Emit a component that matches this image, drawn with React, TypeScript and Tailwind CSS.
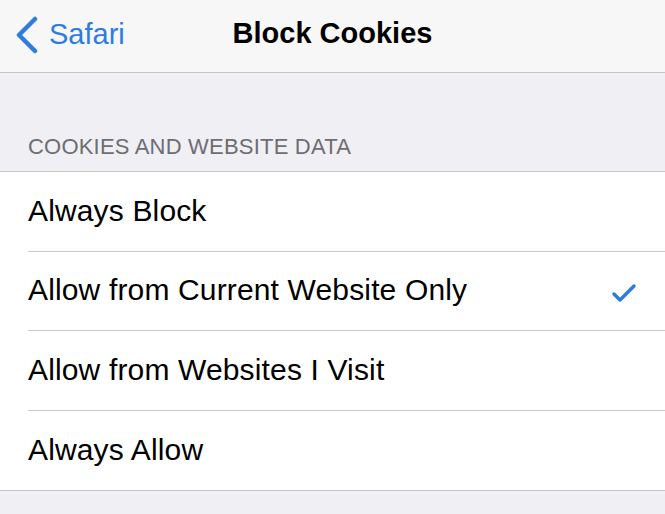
export default function App() {
  const rows = [
    { label: "Always Block", checked: false },
    { label: "Allow from Current Website Only", checked: true },
    { label: "Allow from Websites I Visit", checked: false },
    { label: "Always Allow", checked: false },
  ];

  return (
    <div className="flex h-[514px] w-[665px] flex-col overflow-hidden bg-[#efeff4] font-['Liberation_Sans',sans-serif]">
      <header className="relative flex h-[73px] shrink-0 items-center justify-center border-b border-[#c4c4c8] bg-[#f7f7f8] pb-[4px]">
        <div className="absolute left-[14px] top-0 flex h-full items-center gap-[9px] pb-[2px] text-[#2f7ce0]">
          <svg width="26" height="38" viewBox="0 0 26 38" fill="none">
            <path d="M21 3L5 19l16 16" stroke="currentColor" strokeWidth="4.5" strokeLinecap="round" strokeLinejoin="round" />
          </svg>
          <span className="text-[29px]">Safari</span>
        </div>
        <h1 className="text-[29px] font-bold text-black">Block Cookies</h1>
      </header>

      <div className="flex h-[98px] shrink-0 items-end px-[28px] pb-[8px]">
        <span className="text-[22px] uppercase tracking-[0.2px] text-[#6d6d72]">
          Cookies and website data
        </span>
      </div>

      <ul className="border-y border-[#c8c7cc] bg-white">
        {rows.map((row, i) => (
          <li key={row.label} className="pl-[28px]">
            <div
              className={
                "flex h-[79.5px] items-center justify-between pr-[28px] pb-[2px] " +
                (i < rows.length - 1 ? "border-b border-[#c8c7cc]" : "")
              }
            >
              <span className="text-[30px] tracking-[0.15px] text-black">{row.label}</span>
              {row.checked && (
                <svg width="26" height="22" viewBox="0 0 26 22" fill="none" className="mt-[6px]">
                  <path d="M3 12l6 6L23 4" stroke="#2f7ce0" strokeWidth="3.5" strokeLinecap="round" strokeLinejoin="round" />
                </svg>
              )}
            </div>
          </li>
        ))}
      </ul>
    </div>
  );
}
